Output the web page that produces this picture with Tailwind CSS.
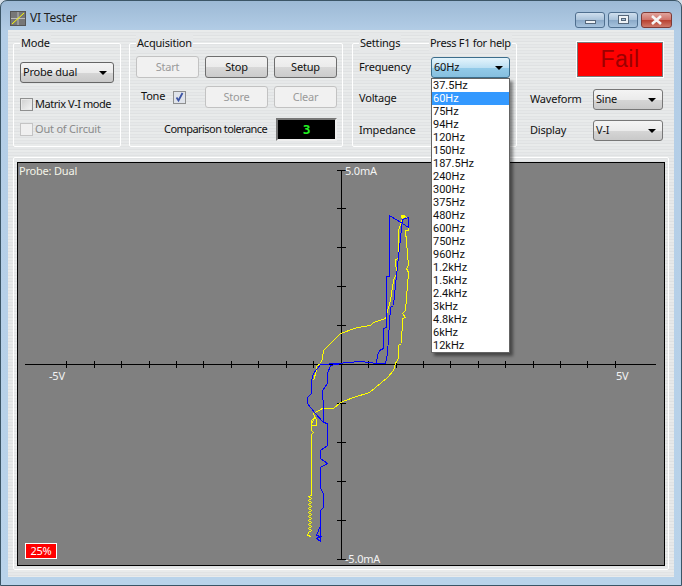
<!DOCTYPE html>
<html lang="en">
<head>
  <meta charset="UTF-8" />
  <title>VI Tester</title>
  <script src="https://cdn.jsdelivr.net/npm/@tailwindcss/browser@4"></script>
</head>
<body class="bg-[#d5dfe8]">
  <div class="w-[682px] h-[586px] overflow-hidden flex flex-col rounded-t-[7px] border-t border-x border-b border-[#3b5566] bg-[linear-gradient(180deg,#9cb9d5_0px,#b3cde6_30px,#b9d3ea_100%)] font-['Noto_Sans',sans-serif] text-[11px] tracking-[-0.2px] text-[#111]">

    <!-- Title bar -->
    <div class="h-[29px] shrink-0 flex items-center pl-[9px] pr-[9px]">
      <svg width="16" height="15" viewBox="0 0 16 15" class="mt-[5px]">
        <rect x="0" y="0" width="16" height="15" fill="#555" />
        <rect x="1" y="1" width="14" height="13" fill="#777" />
        <path d="M8 1V14M1 7.5H15" stroke="#bbb" stroke-width="1" />
        <path d="M2 13L14 2" stroke="#ff0" stroke-width="1" />
      </svg>
      <span class="ml-[4px] mt-[4px] text-[12px] tracking-[-0.2px] text-[#222]">VI Tester</span>
      <div class="ml-auto flex gap-[3px] mt-[8px] items-start">
        <div class="w-[30px] h-[16px] rounded-[3px] border border-[#4f6f8f] bg-[linear-gradient(180deg,#cfdfee_0%,#a9c2da_50%,#8aa9c8_51%,#a7c3dd_100%)] flex items-end justify-center pb-[3px]">
          <div class="w-[11px] h-[4px] bg-[#eef2f6] border border-[#55677a]"></div>
        </div>
        <div class="w-[30px] h-[16px] rounded-[3px] border border-[#4f6f8f] bg-[linear-gradient(180deg,#cfdfee_0%,#a9c2da_50%,#8aa9c8_51%,#a7c3dd_100%)] flex items-center justify-center">
          <div class="w-[11px] h-[9px] bg-[#eef2f6] border border-[#55677a] flex items-center justify-center">
            <div class="w-[5px] h-[3px] bg-[#a9c2da] border border-[#55677a]"></div>
          </div>
        </div>
        <div class="w-[31px] h-[16px] rounded-[3px] border border-[#7f3a35] bg-[linear-gradient(180deg,#e0a49d_0%,#cf7268_50%,#b8402f_51%,#cf7a6a_100%)] flex items-center justify-center">
          <svg width="13" height="10" viewBox="0 0 13 10"><path d="M2 1L11 9M11 1L2 9" stroke="#f5f5f5" stroke-width="2.6" /></svg>
        </div>
      </div>
    </div>

    <!-- Client area -->
    <div class="mx-[7px] w-[666px] h-[547px] shrink-0 px-[5px] pt-[13px] bg-[repeating-linear-gradient(180deg,#e9ebeb_0px,#e9ebeb_2px,#e1e3e4_2px,#e1e3e4_3px,#e6e8e9_3px,#e6e8e9_5px,#dfe1e2_5px,#dfe1e2_6px)]">
      <div class="flex h-[104px]">

        <!-- Mode -->
        <div class="relative w-[108px] h-[104px] border border-white rounded-[2px] pl-[6px] pt-[18px] shrink-0">
          <span class="absolute -top-[9px] left-[6px] px-[1px] bg-[#e6e8e9]">Mode</span>
          <div class="w-[94px] h-[21px] rounded-[3px] border border-[#666] bg-[linear-gradient(180deg,#f4f4f4_0%,#ebebeb_50%,#d6d6d6_51%,#c9c9c9_100%)] flex items-center justify-between pl-[2px] pr-[6px]">
            <span>Probe dual</span>
            <svg width="8" height="4" viewBox="0 0 8 4"><path d="M0 0H8L4 4Z" fill="#000" /></svg>
          </div>
          <div class="mt-[15px] h-[12px] flex items-center">
            <div class="w-[13px] h-[13px] border border-[#8e8f8f] bg-[linear-gradient(135deg,#cfcfcf,#f4f4f4)] shadow-[inset_0_0_0_1px_#e8e8e8]"></div>
            <span class="ml-[2px] whitespace-nowrap tracking-[-0.45px]">Matrix V-I mode</span>
          </div>
          <div class="mt-[13px] h-[12px] flex items-center text-[#8b8b8b]">
            <div class="w-[13px] h-[13px] border border-[#c4c4c4] bg-[#f0f0f0]"></div>
            <span class="ml-[2px] whitespace-nowrap">Out of Circuit</span>
          </div>
        </div>

        <!-- Acquisition -->
        <div class="relative ml-[8px] w-[214px] h-[104px] border border-white rounded-[2px] pl-[6px] pt-[12px] shrink-0">
          <span class="absolute -top-[9px] left-[6px] px-[1px] bg-[#e6e8e9]">Acquisition</span>
          <div class="flex gap-[6px]">
            <div class="w-[63px] h-[22px] rounded-[3px] border border-[#c2c2c2] bg-[#f1f1f1] text-[#9a9a9a] flex items-center justify-center">Start</div>
            <div class="w-[63px] h-[22px] rounded-[3px] border border-[#6e6e6e] bg-[linear-gradient(180deg,#f2f2f2_0%,#ebebeb_50%,#d8d8d8_51%,#cbcbcb_100%)] flex items-center justify-center">Stop</div>
            <div class="w-[63px] h-[22px] rounded-[3px] border border-[#6e6e6e] bg-[linear-gradient(180deg,#f2f2f2_0%,#ebebeb_50%,#d8d8d8_51%,#cbcbcb_100%)] flex items-center justify-center">Setup</div>
          </div>
          <div class="flex mt-[8px] h-[22px] items-center">
            <span class="w-[32px] ml-[5px] -mt-[1px]">Tone</span>
            <div class="w-[13px] h-[13px] border border-[#8e8f8f] bg-[#dfe3ea] flex items-center justify-center">
              <svg width="9" height="10" viewBox="0 0 9 10"><path d="M1.5 5.5L3.5 8.5L7.5 1" fill="none" stroke="#3d55a5" stroke-width="1.8" /></svg>
            </div>
            <div class="ml-[19px] w-[63px] h-[22px] rounded-[3px] border border-[#c2c2c2] bg-[#f1f1f1] text-[#9a9a9a] flex items-center justify-center">Store</div>
            <div class="ml-[6px] w-[63px] h-[22px] rounded-[3px] border border-[#c2c2c2] bg-[#f1f1f1] text-[#9a9a9a] flex items-center justify-center">Clear</div>
          </div>
          <div class="flex mt-[10px] items-center">
            <span class="ml-[28px] w-[112px] whitespace-nowrap -mt-[1px] tracking-[-0.55px]">Comparison tolerance</span>
            <div class="w-[61px] h-[23px] bg-black border-2 border-t-[#777] border-l-[#777] border-b-[#eee] border-r-[#eee] flex items-center justify-center text-[#22ee22] font-bold font-['DejaVu_Sans_Mono',monospace] text-[13px]">3</div>
          </div>
        </div>

        <!-- Settings -->
        <div class="relative ml-[9px] w-[165px] h-[104px] border border-white rounded-[2px] pl-[6px] pt-[13px] shrink-0">
          <span class="absolute -top-[9px] left-[6px] px-[1px] bg-[#e6e8e9]">Settings</span>
          <span class="absolute -top-[9px] left-[76px] px-[1px] bg-[#e6e8e9] whitespace-nowrap tracking-[-0.3px]">Press F1 for help</span>
          <div class="flex h-[21px] items-center">
            <span class="w-[72px] -mt-[1px]">Frequency</span>
            <div class="relative w-[79px] h-[21px] rounded-[3px] border border-[#3c6e8c] bg-[linear-gradient(180deg,#e4f4fc_0%,#bde0f3_50%,#93cbe9_51%,#86bfdf_100%)] flex items-center justify-between pl-[2px] pr-[6px]">
              <span>60Hz</span>
              <svg width="8" height="4" viewBox="0 0 8 4"><path d="M0 0H8L4 4Z" fill="#000" /></svg>
              <!-- open frequency list -->
              <div class="absolute z-10 -left-[1px] top-[20px] w-[79px] h-[275px] bg-white border border-[#646464] shadow-[3px_3px_3px_rgba(0,0,0,0.45)] flex flex-col font-['Roboto',sans-serif] tracking-normal leading-[13px]">
                <div class="pl-[1px] h-[13px]">37.5Hz</div>
                <div class="pl-[1px] h-[13px] bg-[#3399ff] text-white">60Hz</div>
                <div class="pl-[1px] h-[13px]">75Hz</div>
                <div class="pl-[1px] h-[13px]">94Hz</div>
                <div class="pl-[1px] h-[13px]">120Hz</div>
                <div class="pl-[1px] h-[13px]">150Hz</div>
                <div class="pl-[1px] h-[13px]">187.5Hz</div>
                <div class="pl-[1px] h-[13px]">240Hz</div>
                <div class="pl-[1px] h-[13px]">300Hz</div>
                <div class="pl-[1px] h-[13px]">375Hz</div>
                <div class="pl-[1px] h-[13px]">480Hz</div>
                <div class="pl-[1px] h-[13px]">600Hz</div>
                <div class="pl-[1px] h-[13px]">750Hz</div>
                <div class="pl-[1px] h-[13px]">960Hz</div>
                <div class="pl-[1px] h-[13px]">1.2kHz</div>
                <div class="pl-[1px] h-[13px]">1.5kHz</div>
                <div class="pl-[1px] h-[13px]">2.4kHz</div>
                <div class="pl-[1px] h-[13px]">3kHz</div>
                <div class="pl-[1px] h-[13px]">4.8kHz</div>
                <div class="pl-[1px] h-[13px]">6kHz</div>
                <div class="pl-[1px] h-[13px]">12kHz</div>
              </div>
            </div>
          </div>
          <div class="mt-[10px] h-[21px] flex items-center">Voltage</div>
          <div class="mt-[11px] h-[21px] flex items-center">Impedance</div>
        </div>

        <!-- Status and display options -->
        <div class="ml-[13px] w-[133px] shrink-0 flex flex-col items-end">
          <div class="-mt-[1px] w-[86px] h-[35px] bg-[#ff0000] border border-[#7a7a7a] outline outline-white flex items-center justify-center font-['Liberation_Sans',sans-serif] text-[23px] tracking-[0.5px] text-[#9c0000]">Fail</div>
          <div class="mt-[12px] w-full h-[21px] flex items-center justify-between">
            <span>Waveform</span>
            <div class="w-[70px] h-[21px] rounded-[3px] border border-[#777] bg-[linear-gradient(180deg,#f4f4f4_0%,#ebebeb_50%,#d6d6d6_51%,#c9c9c9_100%)] flex items-center justify-between pl-[2px] pr-[6px]">
              <span>Sine</span>
              <svg width="8" height="4" viewBox="0 0 8 4"><path d="M0 0H8L4 4Z" fill="#000" /></svg>
            </div>
          </div>
          <div class="mt-[10px] w-full h-[21px] flex items-center justify-between">
            <span>Display</span>
            <div class="w-[70px] h-[21px] rounded-[3px] border border-[#777] bg-[linear-gradient(180deg,#f4f4f4_0%,#ebebeb_50%,#d6d6d6_51%,#c9c9c9_100%)] flex items-center justify-between pl-[2px] pr-[6px]">
              <span>V-I</span>
              <svg width="8" height="4" viewBox="0 0 8 4"><path d="M0 0H8L4 4Z" fill="#000" /></svg>
            </div>
          </div>
        </div>
      </div>

      <!-- Plot group -->
      <div class="mt-[10px] w-[656px] h-[413px] border border-white rounded-[2px] px-[3px] pt-[4px]">
        <div class="relative w-[648px] h-[404px] border border-black bg-[#808080]">
          <svg width="646" height="402" viewBox="18 163 646 402" shape-rendering="crispEdges" class="block font-['Noto_Sans',sans-serif] text-[11px]">
            <!-- axes -->
            <path d="M25 364.5H656M341.5 170V560" stroke="#000" stroke-width="1.2" fill="none" />
            <path d="M66.5 361V368M94 361V368M121.5 361V368M149 361V368M176 361V368M203.5 361V368M231 361V368M258.5 361V368M286 361V368M313.5 361V368M368.5 361V368M396 361V368M423 361V368M450.5 361V368M478 361V368M505.5 361V368M533 361V368M560 361V368M587.5 361V368M615 361V368" stroke="#000" />
            <path d="M337 170.5H346M337 208.5H346M337 247.5H346M337 286.5H346M337 325.5H346M337 403.5H346M337 442.5H346M337 481.5H346M337 520.5H346M337 559.5H346" stroke="#000" />
            <g transform="translate(0.5 0.5)" fill="none" stroke-width="1">
              <!-- yellow trace -->
              <polyline stroke="#ffff00" points="402,216 408,217 408,230 405,230 408,265 406,268 408,272 405,310 402,313 405,317 402,318 401,343 398,345 398,358 395,363 393,370 387,377 369,392 353,397 340,402 333,408 322,408 313,413 316,420 316,425 311,425 311,420 314,417 311,424 311,430 313,432 311,434 311,495 308,496 311,498 308,500 311,502 308,504 311,506 308,508 311,510 308,512 311,514 308,516 311,518 308,520 311,522 308,524 311,526 308,528 311,530 308,532 307,535 311,536" />
              <polyline stroke="#ffff00" points="313,380 316,370 316,366 320,363 322,358 323,350 333,340 340,333 357,327 370,325 373,322 385,318 390,300 393,280 396,273 395,259 398,258 398,230 402,218" />
              <rect x="401" y="215" width="3" height="2" fill="#ffff00" stroke="#ffff00" />
              <!-- blue trace -->
              <polyline stroke="#0000ff" points="389,215 389,276 386,276 386,327 383,328 383,348 379,350 377,355 376,363 360,361 348,362 337,363 320,364 313,373 311,380 311,393 307,397 307,403 314,412 323,422 327,423 327,445 320,450 320,458 327,463 320,467 320,488 323,493 323,507 320,510 320,541 316,538 320,536 316,535 320,525" />
              <polyline stroke="#0000ff" points="389,215 402,223 408,227 408,217 402,219 396,275 393,305 390,307 387,353 385,363 376,363" />
              <polyline stroke="#0000ff" points="341,363 330,365 327,373 327,383 322,390 323,408 323,422" />
            </g>
            <!-- labels -->
            <text x="19" y="175" fill="#f4f4e8">Probe: Dual</text>
            <text x="345" y="175" fill="#f4f4f4">5.0mA</text>
            <text x="345" y="563" fill="#f4f4f4">-5.0mA</text>
            <text x="49" y="380" fill="#f4f4f4">-5V</text>
            <text x="616" y="380" fill="#f4f4f4">5V</text>
          </svg>
          <div class="absolute left-[7px] bottom-[6px] w-[32px] h-[16px] bg-[#ff0000] border border-white text-white flex items-center justify-center">25%</div>
        </div>
      </div>
    </div>
  </div>
</body>
</html>
